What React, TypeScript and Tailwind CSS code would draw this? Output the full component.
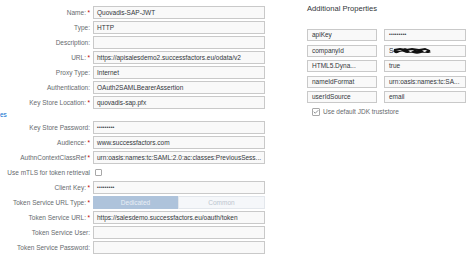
import { Check } from 'lucide-react';

type Row =
  | { kind: 'input'; label: string; req?: boolean; value?: string; secret?: boolean }
  | { kind: 'check'; label: string }
  | { kind: 'segment'; label: string; req?: boolean };

const TOP: Row[] = [
  { kind: 'input', label: 'Name:', req: true, value: 'Quovadis-SAP-JWT' },
  { kind: 'input', label: 'Type:', value: 'HTTP' },
  { kind: 'input', label: 'Description:' },
  { kind: 'input', label: 'URL:', req: true, value: 'https://apisalesdemo2.successfactors.eu/odata/v2' },
  { kind: 'input', label: 'Proxy Type:', value: 'Internet' },
  { kind: 'input', label: 'Authentication:', value: 'OAuth2SAMLBearerAssertion' },
  { kind: 'input', label: 'Key Store Location:', req: true, value: 'quovadis-sap.pfx' },
];

const BOTTOM: Row[] = [
  { kind: 'input', label: 'Key Store Password:', secret: true },
  { kind: 'input', label: 'Audience:', req: true, value: 'www.successfactors.com' },
  { kind: 'input', label: 'AuthnContextClassRef', req: true, value: 'urn:oasis:names:tc:SAML:2.0:ac:classes:PreviousSess...' },
  { kind: 'check', label: 'Use mTLS for token retrieval' },
  { kind: 'input', label: 'Client Key:', req: true, secret: true },
  { kind: 'segment', label: 'Token Service URL Type:', req: true },
  { kind: 'input', label: 'Token Service URL:', req: true, value: 'https://salesdemo.successfactors.eu/oauth/token' },
  { kind: 'input', label: 'Token Service User:' },
  { kind: 'input', label: 'Token Service Password:' },
];

const PROPS = [
  { key: 'apiKey', value: 'secret' },
  { key: 'companyId', value: 'redacted' },
  { key: 'HTML5.Dyna...', value: 'true' },
  { key: 'nameIdFormat', value: 'urn:oasis:names:tc:SA...' },
  { key: 'userIdSource', value: 'email' },
];

function Dots() {
  return <span className="text-[5px] tracking-[0.2px] text-[#32363a]">•••••••••</span>;
}

function FormRow({ row }: { row: Row }) {
  const label = (
    <div className="w-[90px] shrink-0 text-right text-[6.5px] text-[#666a6e] whitespace-nowrap">
      {row.label}
      {'req' in row && row.req && <span className="ml-[1.5px] text-[#bb0000]">*</span>}
    </div>
  );

  if (row.kind === 'check') {
    return (
      <div className="flex h-[15px] items-center">
        <div className="w-[90px] shrink-0 whitespace-nowrap text-right text-[6.5px] text-[#666a6e]">{row.label}</div>
        <span className="ml-[5px] h-[7px] w-[7px] rounded-[1px] border border-[#a8a8a8] bg-white" />
      </div>
    );
  }

  if (row.kind === 'segment') {
    return (
      <div className="flex h-[15px] items-center">
        {label}
        <div className="ml-[3px] flex h-[13px] w-[172px]">
          <div className="flex flex-1 items-center justify-center bg-[#aec3db] text-[6.5px] text-[#e9eff6]">Dedicated</div>
          <div className="flex flex-1 items-center justify-center border border-[#e3e7ec] bg-[#f5f7fa] text-[6.5px] text-[#bcc5ce]">Common</div>
        </div>
      </div>
    );
  }

  return (
    <div className="flex h-[15px] items-center">
      {label}
      <div className="ml-[3px] flex h-[13px] w-[172px] items-center overflow-hidden whitespace-nowrap border border-[#c9c9c9] bg-[#f9f9f9] px-[3px] text-[6.5px] text-[#32363a]">
        {row.secret ? <Dots /> : row.value}
      </div>
    </div>
  );
}

function Redacted() {
  return (
    <span className="flex items-center">
      <span className="text-[6.5px] text-[#32363a]">S</span>
      <svg width="40" height="8" viewBox="0 0 40 8" className="-ml-[1px]">
        <path
          d="M1 4 C4 1 7 6 10 3 S15 1 17 4 S22 2 24 3 S29 1 31 4 S35 2 37 4 L39 5 C36 7 32 5 29 6 S24 7 21 6 S15 7 12 5 S6 7 3 6 Z"
          fill="#111"
        />
        <path d="M2 3 L8 2 L14 3 L20 2 L27 3 L33 2 L38 4" stroke="#111" strokeWidth="1.8" fill="none" />
      </svg>
    </span>
  );
}

export default function App() {
  return (
    <div
      className="flex h-[260px] w-[474px] overflow-hidden bg-white"
      style={{ fontFamily: '"Liberation Sans", Arial, sans-serif' }}
    >
      <div className="w-[300px] shrink-0 pt-[5px]">
        {TOP.map((r) => (
          <FormRow key={r.label} row={r} />
        ))}
        <div className="flex h-[10px] items-center text-[6.5px] text-[#0a6ed1]">es</div>
        {BOTTOM.map((r) => (
          <FormRow key={r.label} row={r} />
        ))}
      </div>

      <div className="flex-1 pl-[7px] pt-[4px]">
        <div className="h-[10px] text-[7.6px] leading-[10px] text-[#32363a]">Additional Properties</div>
        <div className="mt-[15px] flex flex-col gap-[3.5px]">
          {PROPS.map((p) => (
            <div key={p.key} className="flex h-[12px] gap-[7px]">
              <div className="flex w-[70px] items-center border border-[#c9c9c9] bg-[#f9f9f9] px-[4px] text-[6.5px] text-[#32363a]">
                {p.key}
              </div>
              <div className="flex w-[82px] items-center overflow-hidden whitespace-nowrap border border-[#c9c9c9] bg-[#f9f9f9] px-[4px] text-[6.5px] text-[#32363a]">
                {p.value === 'secret' ? <Dots /> : p.value === 'redacted' ? <Redacted /> : p.value}
              </div>
            </div>
          ))}
        </div>
        <div className="mt-[4px] flex items-center gap-[3px] pl-[5px]">
          <span className="flex h-[8px] w-[8px] items-center justify-center rounded-[1px] border border-[#a8a8a8] bg-white">
            <Check className="h-[6px] w-[6px] text-[#6a6d70]" strokeWidth={3} />
          </span>
          <span className="text-[6.5px] text-[#666a6e]">Use default JDK truststore</span>
        </div>
      </div>
    </div>
  );
}
